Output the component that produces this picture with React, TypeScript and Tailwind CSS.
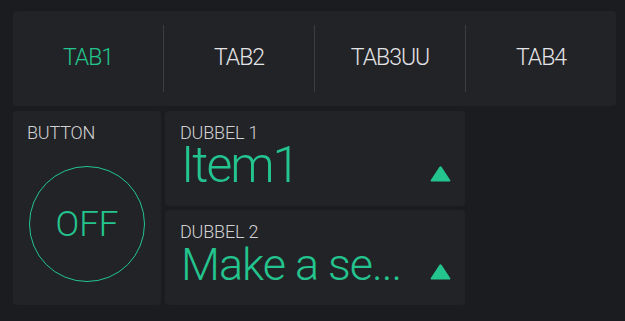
import React from "react";

const GREEN = "#23c48e";

function Tri() {
  return (
    <svg width="21" height="16" viewBox="0 0 21 16" className="shrink-0">
      <path d="M9.2 1.2 Q10.5 -0.6 11.8 1.2 L20.2 14 Q20.8 15.5 19 15.5 L2 15.5 Q0.2 15.5 0.8 14 Z" fill={GREEN} />
    </svg>
  );
}

function Dubbel({ label, value, size, mt }: { label: string; value: string; size: string; mt: string }) {
  return (
    <div className="w-[300px] h-[95px] rounded-[4px] bg-[#222327] pt-[14px] pl-[15px] pr-[14px] flex flex-col">
      <div className="text-[18px] leading-[16px] font-light text-[#d2d2d4] tracking-[-0.2px]">{label}</div>
      <div className={`flex items-baseline justify-between ${mt}`}>
        <span className={`${size} font-light text-[#23c48e] pl-[1px]`}>{value}</span>
        <Tri />
      </div>
    </div>
  );
}

export default function App() {
  const tabs = ["TAB1", "TAB2", "TAB3UU", "TAB4"];
  return (
    <div
      className="w-[625px] h-[321px] bg-[#1b1c20] pt-[11px] pl-[13px] flex flex-col"
      style={{ fontFamily: "Roboto, 'Noto Sans', sans-serif" }}
    >
      <div className="w-[603px] h-[95px] rounded-[4px] bg-[#222327] flex items-center">
        {tabs.map((t, i) => (
          <React.Fragment key={t}>
            {i > 0 && <div className="w-px h-[67px] bg-[#3c3d41]" />}
            <div
              className={`flex-1 text-center pb-[3px] text-[23px] leading-none font-light tracking-[-1px] ${
                i === 0 ? "text-[#23c48e]" : "text-[#e4e4e6]"
              }`}
            >
              {t}
            </div>
          </React.Fragment>
        ))}
      </div>
      <div className="mt-[5px] flex gap-[4px]">
        <div className="w-[148px] h-[194px] rounded-[4px] bg-[#222327] pt-[14px] pl-[14px] flex flex-col">
          <div className="text-[18px] leading-[16px] font-light text-[#d2d2d4] tracking-[-0.2px]">BUTTON</div>
          <div className="mt-[25px] ml-[2px] w-[116px] h-[116px] rounded-full border border-[#23c48e] flex items-center justify-center">
            <span className="text-[35px] leading-none text-[#23c48e] font-light">OFF</span>
          </div>
        </div>
        <div className="flex flex-col gap-[4px]">
          <Dubbel label="DUBBEL 1" value="Item1" size="text-[50px] leading-[40px] tracking-[-2px]" mt="mt-[4px]" />
          <Dubbel label="DUBBEL 2" value="Make a se..." size="text-[45px] leading-[36px] tracking-[-1px]" mt="mt-[7px]" />
        </div>
      </div>
    </div>
  );
}
